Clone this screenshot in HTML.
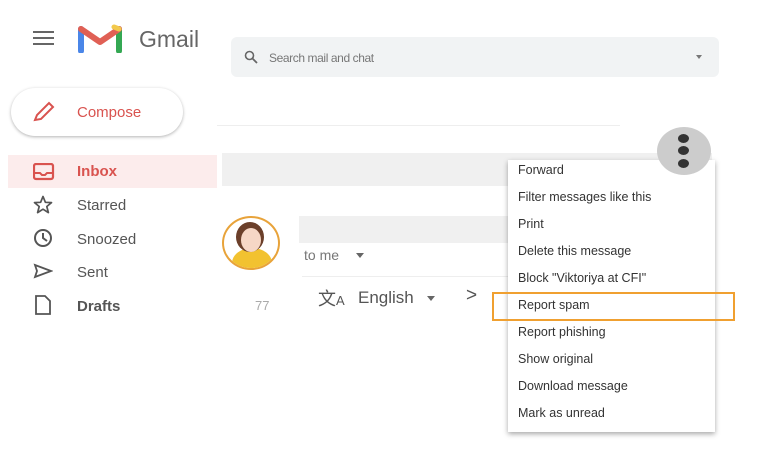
<!DOCTYPE html>
<html><head><style>
body{margin:0;width:768px;height:470px;background:#fff;position:relative;overflow:hidden;font-family:"Liberation Sans",Arial,sans-serif;color:#444}
.a{position:absolute}
.nav{font-size:15px;color:#555}
.mi{position:absolute;left:518px;font-size:12.5px;color:#333}
</style></head><body>
<div class="a" style="left:33px;top:31px;width:21px;height:2px;background:#666"></div>
<div class="a" style="left:33px;top:37px;width:21px;height:2px;background:#666"></div>
<div class="a" style="left:33px;top:43px;width:21px;height:2px;background:#666"></div>
<svg class="a" style="left:78px;top:23px" width="44" height="30" viewBox="0 0 44 30">
<path d="M3 28V6" stroke="#4a86e8" stroke-width="6" stroke-linecap="round"/>
<path d="M41 28V6" stroke="#34a853" stroke-width="6" stroke-linecap="round"/>
<path d="M3 6L22 19L41 6" stroke="#e06055" stroke-width="6" fill="none" stroke-linejoin="round" stroke-linecap="round"/>
<path d="M36 4L41 6" stroke="#f2c94c" stroke-width="5" stroke-linecap="round"/>
</svg>
<div class="a" style="left:139px;top:26px;font-size:23px;color:#666">Gmail</div>
<div class="a" style="left:231px;top:37px;width:488px;height:40px;background:#f1f3f4;border-radius:6px"></div>
<svg class="a" style="left:244px;top:50px" width="14" height="14"><circle cx="5.5" cy="5.5" r="4" stroke="#666" stroke-width="1.6" fill="none"/><path d="M8.5 8.5L13 13" stroke="#666" stroke-width="1.8"/></svg>
<div class="a" style="left:269px;top:51px;font-size:12px;color:#777;letter-spacing:-0.4px">Search mail and chat</div>
<div class="a" style="left:696px;top:55px;border:3px solid transparent;border-top:4px solid #777"></div>
<div class="a" style="left:11px;top:88px;width:172px;height:48px;border-radius:25px;box-shadow:0 1px 3px rgba(0,0,0,.3);background:#fff"></div>
<svg class="a" style="left:32px;top:101px" width="24" height="22"><path d="M3 19L5 14L17 2L21 6L9 18Z" stroke="#d9534f" stroke-width="2" fill="none"/></svg>
<div class="a" style="left:77px;top:104px;font-size:15px;color:#d9534f">Compose</div>
<div class="a" style="left:8px;top:155px;width:209px;height:33px;background:#fcecec"></div>
<svg class="a" style="left:33px;top:163px" width="22" height="18"><rect x="1" y="1" width="19" height="15" rx="2" fill="none" stroke="#d9534f" stroke-width="2.2"/><path d="M1 10H7L9 12H12L14 10H20" stroke="#d9534f" stroke-width="2" fill="none"/></svg>
<div class="a nav" style="left:77px;top:163px;color:#d9534f;font-weight:bold">Inbox</div>
<svg class="a" style="left:33px;top:195px" width="20" height="20"><path d="M10 1.5L12.4 7.3L18.5 7.6L13.8 11.5L15.4 17.6L10 14.2L4.6 17.6L6.2 11.5L1.5 7.6L7.6 7.3Z" stroke="#555" stroke-width="1.7" fill="none" stroke-linejoin="round"/></svg>
<div class="a nav" style="left:77px;top:197px">Starred</div>
<svg class="a" style="left:33px;top:228px" width="20" height="20"><circle cx="10" cy="10" r="8" stroke="#555" stroke-width="2" fill="none"/><path d="M10 5V10L14 13" stroke="#555" stroke-width="2" fill="none"/></svg>
<div class="a nav" style="left:77px;top:231px">Snoozed</div>
<svg class="a" style="left:33px;top:263px" width="20" height="16"><path d="M2 2L18 8L2 14L4 8Z" stroke="#555" stroke-width="1.8" fill="none"/></svg>
<div class="a nav" style="left:77px;top:264px">Sent</div>
<svg class="a" style="left:35px;top:295px" width="16" height="20"><path d="M1 1H10L15 6V19H1Z" stroke="#555" stroke-width="1.8" fill="none"/></svg>
<div class="a nav" style="left:77px;top:298px;font-weight:bold">Drafts</div>
<div class="a" style="left:255px;top:298px;font-size:13px;color:#aaa">77</div>
<div class="a" style="left:217px;top:125px;width:403px;height:1px;background:#eee"></div>
<div class="a" style="left:222px;top:153px;width:490px;height:33px;background:#f0f0f0"></div>
<div class="a" style="left:299px;top:216px;width:210px;height:27px;background:#f0f0f0"></div>
<div class="a" style="left:222px;top:216px;width:54px;height:50px;border-radius:50%;border:2px solid #e8a33a;background:#fff;overflow:hidden">
<div class="a" style="left:8px;top:30px;width:40px;height:30px;border-radius:50%;background:#f2c230"></div>
<div class="a" style="left:12px;top:4px;width:28px;height:30px;border-radius:50%;background:#6b3f2a"></div>
<div class="a" style="left:17px;top:10px;width:20px;height:24px;border-radius:50%;background:#f6d7c6"></div>
</div>
<div class="a" style="left:304px;top:247px;font-size:14px;color:#777">to me</div>
<div class="a" style="left:356px;top:253px;border:4px solid transparent;border-top:5px solid #666"></div>
<div class="a" style="left:302px;top:276px;width:210px;height:1px;background:#eee"></div>
<div class="a" style="left:318px;top:285px;font-size:18px;color:#555">文<span style="font-size:13px">A</span></div>
<div class="a" style="left:358px;top:288px;font-size:17px;color:#555">English</div>
<div class="a" style="left:427px;top:296px;border:4px solid transparent;border-top:5px solid #666"></div>
<div class="a" style="left:466px;top:285px;font-size:19px;color:#555">&gt;</div>
<div class="a" style="left:508px;top:160px;width:207px;height:272px;background:#fff;box-shadow:0 2px 5px rgba(0,0,0,.35)"></div>
<div class="mi" style="top:163px">Forward</div>
<div class="mi" style="top:190px">Filter messages like this</div>
<div class="mi" style="top:217px">Print</div>
<div class="mi" style="top:244px">Delete this message</div>
<div class="mi" style="top:271px">Block "Viktoriya at CFI"</div>
<div class="mi" style="top:298px">Report spam</div>
<div class="mi" style="top:325px">Report phishing</div>
<div class="mi" style="top:352px">Show original</div>
<div class="mi" style="top:379px">Download message</div>
<div class="mi" style="top:406px">Mark as unread</div>
<div class="a" style="left:492px;top:292px;width:239px;height:25px;border:2px solid #f0a030"></div>
<div class="a" style="left:657px;top:127px;width:54px;height:48px;border-radius:50%;background:#ccc"></div>
<div class="a" style="left:678px;top:134px;width:11px;height:9px;border-radius:50%;background:#333"></div>
<div class="a" style="left:678px;top:146px;width:11px;height:9px;border-radius:50%;background:#333"></div>
<div class="a" style="left:678px;top:159px;width:11px;height:9px;border-radius:50%;background:#333"></div>
</body></html>
